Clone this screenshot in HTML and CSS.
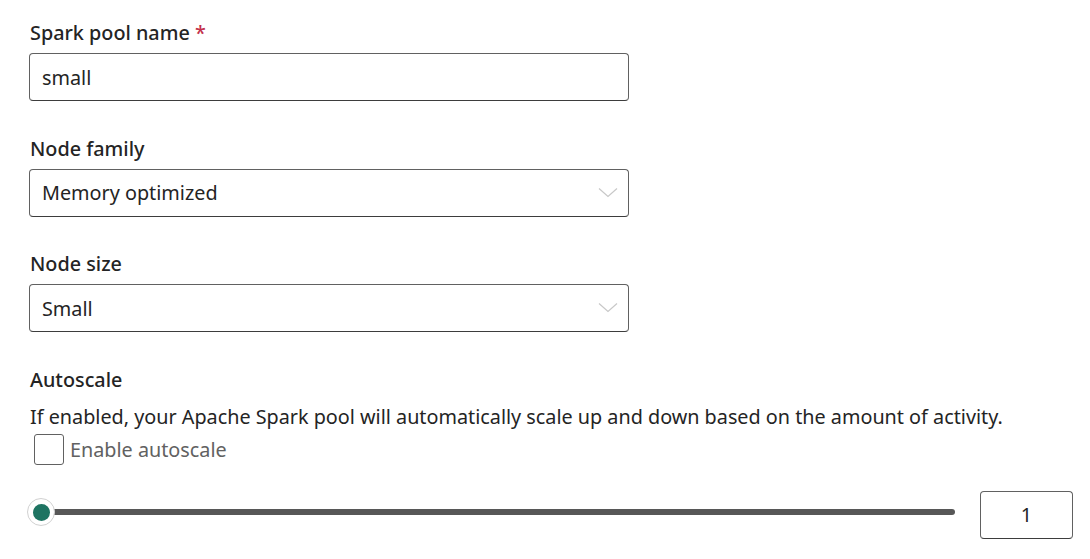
FILE: index.html
```html
<!DOCTYPE html>
<html>
<head>
<meta charset="utf-8">
<link rel="stylesheet" href="styles.css">
</head>
<body>
<div class="form">
  <div class="field">
    <label class="label">Spark pool name <span class="req">*</span></label>
    <div class="box"><span class="value">small</span></div>
  </div>
  <div class="field">
    <label class="label">Node family</label>
    <div class="box select"><span class="value">Memory optimized</span>
      <svg class="chev" width="20" height="12" viewBox="0 0 20 12"><path d="M1 1.5 L10 9.5 L19 1.5" fill="none" stroke="#c8c8c8" stroke-width="1.2"/></svg>
    </div>
  </div>
  <div class="field">
    <label class="label">Node size</label>
    <div class="box select"><span class="value">Small</span>
      <svg class="chev" width="20" height="12" viewBox="0 0 20 12"><path d="M1 1.5 L10 9.5 L19 1.5" fill="none" stroke="#c8c8c8" stroke-width="1.2"/></svg>
    </div>
  </div>
  <div class="autoscale">
    <div class="label">Autoscale</div>
    <p class="desc">If enabled, your Apache Spark pool will automatically scale up and down based on the amount of activity.</p>
    <div class="check-row">
      <span class="checkbox"></span>
      <span class="check-label">Enable autoscale</span>
    </div>
  </div>
  <div class="slider-row">
    <div class="slider">
      <div class="track"></div>
      <div class="thumb"><div class="dot"></div></div>
    </div>
    <div class="numbox">1</div>
  </div>
</div>
</body>
</html>
```
FILE: styles.css
```css
html, body {
  margin: 0;
  padding: 0;
  background: #ffffff;
}
body {
  font-family: "Noto Sans", "Open Sans", sans-serif;
  color: #242424;
  font-size: 19.8px;
}
.form {
  padding: 19px 0 0 29px;
  display: flex;
  flex-direction: column;
}
.field {
  display: flex;
  flex-direction: column;
  margin-bottom: 33.5px;
}
.label {
  display: block;
  font-weight: 500;
  font-size: 19.8px;
  line-height: 28px;
  height: 28px;
  margin-bottom: 6px;
  margin-left: 1px;
  color: #242424;
}
.req {
  color: #c4314b;
}
.box {
  box-sizing: border-box;
  width: 600px;
  height: 48px;
  border: 1px solid #616161;
  border-bottom-color: #3d3d3d;
  border-radius: 4px;
  display: flex;
  align-items: center;
  padding: 0 12px;
  justify-content: space-between;
}
.value {
  font-size: 19.8px;
  color: #242424;
}
.chev {
  margin-right: -2px;
}
.autoscale {
  margin-top: 0;
}
.desc {
  margin: 9px 0 0 1px;
  font-size: 19.8px;
  line-height: 28px;
}
.check-row {
  display: flex;
  align-items: center;
  margin: 2px 0 0 5px;
  height: 33px;
}
.checkbox {
  box-sizing: border-box;
  width: 30px;
  height: 31px;
  border: 1px solid #616161;
  border-radius: 3px;
  margin-right: 6px;
}
.check-label {
  color: #616161;
  font-size: 19.8px;
}
.slider-row {
  display: flex;
  align-items: center;
  margin-top: 20px;
  width: 1044px;
}
.slider {
  position: relative;
  width: 928px;
  height: 28px;
  margin-left: -2px;
}
.track {
  position: absolute;
  left: 12px;
  right: 0;
  top: 11px;
  height: 6px;
  border-radius: 3px;
  background: #575757;
}
.thumb {
  position: absolute;
  left: 0;
  top: 0;
  box-sizing: border-box;
  width: 28px;
  height: 28px;
  border-radius: 50%;
  background: #fff;
  border: 1px solid #d1d1d1;
  display: flex;
  align-items: center;
  justify-content: center;
}
.dot {
  width: 17px;
  height: 17px;
  border-radius: 50%;
  background: #1e7462;
}
.numbox {
  box-sizing: border-box;
  margin-left: auto;
  margin-top: 5px;
  width: 93px;
  height: 48px;
  border: 1px solid #616161;
  border-bottom-color: #3d3d3d;
  border-radius: 4px;
  display: flex;
  align-items: center;
  justify-content: center;
  font-size: 19.8px;
}
```
